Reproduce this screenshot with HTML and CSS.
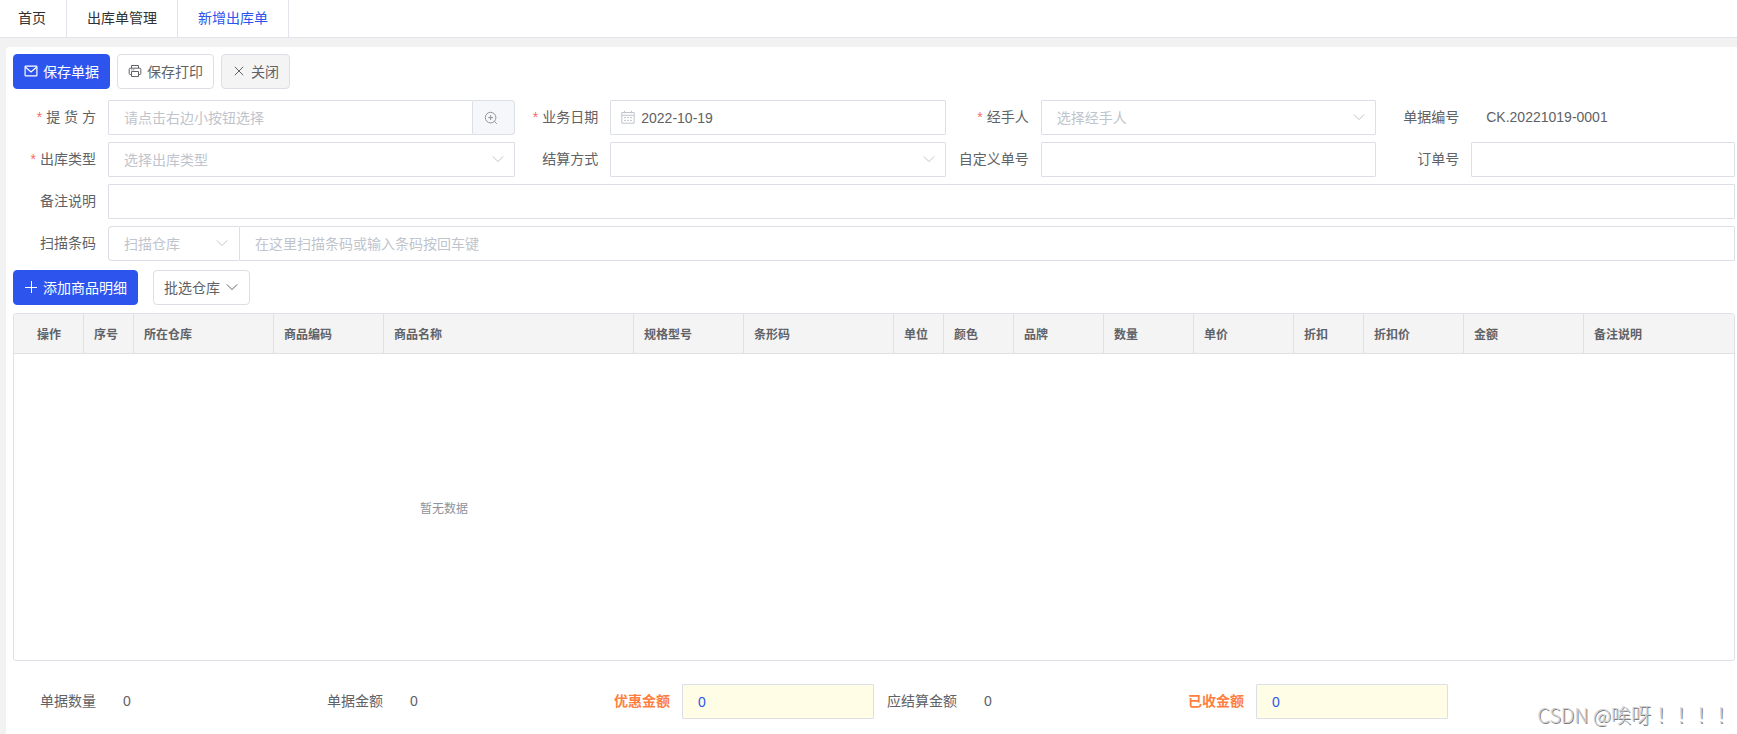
FILE: index.html
```html
<!DOCTYPE html>
<html lang="zh-CN">
<head>
    <meta charset="UTF-8">
    <meta name="viewport" content="width=device-width, initial-scale=1.0">
    <title>新增出库单</title>
    <link rel="stylesheet" href="styles.css">
</head>
<body>
    <!-- shared icons -->
    <svg class="sprite" width="0" height="0" aria-hidden="true">
        <symbol id="arrow-down" viewBox="0 0 14 14">
            <path d="M1.8 4.4 7 9.6l5.2-5.2" fill="none" stroke="currentColor"/>
        </symbol>
    </svg>

    <nav class="tabs">
        <a href="#" class="tab">首页</a>
        <a href="#" class="tab">出库单管理</a>
        <a href="#" class="tab active">新增出库单</a>
    </nav>

    <main class="panel">
        <div class="toolbar">
            <button type="button" class="btn primary">
                <svg class="icon" viewBox="0 0 14 14" fill="none" stroke="currentColor" stroke-width="1.2"><rect x="1.1" y="2.1" width="11.8" height="9.8" rx="0.6"/><path d="M1.5 3.2 7 8l5.5-4.8"/></svg>
                <span>保存单据</span>
            </button>
            <button type="button" class="btn">
                <svg class="icon" viewBox="0 0 14 14" fill="none" stroke="currentColor"><path d="M3.5 4V1.5h7V4M3.5 10.5H2.2a1 1 0 0 1-1-1V5.2a1 1 0 0 1 1-1h9.6a1 1 0 0 1 1 1v4.3a1 1 0 0 1-1 1h-1.3"/><path d="M3.5 7.5h7v5h-7zM3.3 5.9h1M5.3 5.9h1"/></svg>
                <span>保存打印</span>
            </button>
            <button type="button" class="btn muted">
                <svg class="icon" viewBox="0 0 14 14" fill="none" stroke="currentColor"><path d="m2.8 2.8 8.4 8.4M11.2 2.8l-8.4 8.4"/></svg>
                <span>关闭</span>
            </button>
        </div>

        <form class="form">
            <div class="form-item span-7">
                <label for="customer" class="required">提 货 方</label>
                <div class="field group">
                    <input type="text" id="customer" class="input" placeholder="请点击右边小按钮选择">
                    <button type="button" class="append" aria-label="选择提货方">
                        <svg class="icon" viewBox="0 0 14 14" fill="none" stroke="currentColor"><circle cx="6.6" cy="6.6" r="5.3"/><path d="M4.2 6.6H9M6.6 4.2V9M10.4 10.4l2.4 2.4"/></svg>
                    </button>
                </div>
            </div>
            <div class="form-item span-6">
                <label for="date" class="required">业务日期</label>
                <div class="field">
                    <svg class="icon date-icon" viewBox="0 0 14 14" fill="none" stroke="currentColor"><path d="M.8 2.5h12.4v10.7H.8zM.8 5.3h12.4M3.5.8v2.4M10.5.8v2.4"/><path d="M3 7.6h2M6 7.6h2M9 7.6h2M3 10.4h2M6 10.4h2M9 10.4h2"/></svg>
                    <input type="text" id="date" class="input with-icon" value="2022-10-19">
                </div>
            </div>
            <div class="form-item span-6">
                <label for="handler" class="required">经手人</label>
                <div class="field">
                    <select id="handler" class="input select"><option>选择经手人</option></select>
                    <svg class="icon arrow"><use href="#arrow-down"/></svg>
                </div>
            </div>
            <div class="form-item span-5">
                <span class="label">单据编号</span>
                <span class="value">CK.20221019-0001</span>
            </div>

            <div class="form-item span-7">
                <label for="type" class="required">出库类型</label>
                <div class="field">
                    <select id="type" class="input select"><option>选择出库类型</option></select>
                    <svg class="icon arrow"><use href="#arrow-down"/></svg>
                </div>
            </div>
            <div class="form-item span-6">
                <label for="settle">结算方式</label>
                <div class="field">
                    <select id="settle" class="input select"><option></option></select>
                    <svg class="icon arrow"><use href="#arrow-down"/></svg>
                </div>
            </div>
            <div class="form-item span-6">
                <label for="custom-no">自定义单号</label>
                <div class="field"><input type="text" id="custom-no" class="input"></div>
            </div>
            <div class="form-item span-5">
                <label for="order-no">订单号</label>
                <div class="field"><input type="text" id="order-no" class="input"></div>
            </div>

            <div class="form-item span-24">
                <label for="remark">备注说明</label>
                <div class="field"><input type="text" id="remark" class="input"></div>
            </div>

            <div class="form-item span-24">
                <label for="barcode">扫描条码</label>
                <div class="field group">
                    <div class="prepend">
                        <select class="input select" aria-label="扫描仓库"><option>扫描仓库</option></select>
                        <svg class="icon arrow"><use href="#arrow-down"/></svg>
                    </div>
                    <input type="text" id="barcode" class="input" placeholder="在这里扫描条码或输入条码按回车键">
                </div>
            </div>
        </form>

        <div class="toolbar detail-bar">
            <button type="button" class="btn primary">
                <svg class="icon" viewBox="0 0 14 14" fill="none" stroke="currentColor"><path d="M1 7.5h12M7.5 1v12"/></svg>
                <span>添加商品明细</span>
            </button>
            <button type="button" class="btn">
                <span>批选仓库</span>
                <svg class="icon"><use href="#arrow-down"/></svg>
            </button>
        </div>

        <div class="table-wrap">
            <table class="table">
                <colgroup>
                    <col class="w70"><col class="w50"><col class="w140"><col class="w110">
                    <col class="w250"><col class="w110"><col class="w150"><col class="w50">
                    <col class="w70"><col class="w90"><col class="w90"><col class="w100">
                    <col class="w70"><col class="w100"><col class="w120"><col>
                </colgroup>
                <thead>
                    <tr>
                        <th class="center">操作</th>
                        <th>序号</th>
                        <th>所在仓库</th>
                        <th>商品编码</th>
                        <th>商品名称</th>
                        <th>规格型号</th>
                        <th>条形码</th>
                        <th>单位</th>
                        <th>颜色</th>
                        <th>品牌</th>
                        <th>数量</th>
                        <th>单价</th>
                        <th>折扣</th>
                        <th>折扣价</th>
                        <th>金额</th>
                        <th>备注说明</th>
                    </tr>
                </thead>
                <tbody>
                    <tr>
                        <td colspan="16" class="empty"><div class="empty-text">暂无数据</div></td>
                    </tr>
                </tbody>
            </table>
        </div>

        <div class="summary">
            <div class="form-item">
                <span class="label">单据数量</span>
                <span class="value">0</span>
            </div>
            <div class="form-item">
                <span class="label">单据金额</span>
                <span class="value">0</span>
            </div>
            <div class="form-item">
                <label for="discount" class="strong">优惠金额</label>
                <div class="field"><input type="text" id="discount" class="input money" value="0"></div>
            </div>
            <div class="form-item">
                <span class="label">应结算金额</span>
                <span class="value">0</span>
            </div>
            <div class="form-item">
                <label for="received" class="strong">已收金额</label>
                <div class="field"><input type="text" id="received" class="input money" value="0"></div>
            </div>
        </div>
    </main>

    <div class="watermark" lang="zh-TW">CSDN @唉呀！！！！</div>
</body>
</html>
```

FILE: styles.css
```css
* {
    box-sizing: border-box;
}
body {
    margin: 0;
    min-height: 100vh;
    display: flex;
    flex-direction: column;
    position: relative;
    background: #f2f2f2;
    color: #606266;
    font-family: "Liberation Sans", "Noto Sans CJK SC", sans-serif;
    font-size: 14px;
    overflow-x: hidden;
}
button, input, select {
    font: inherit;
    color: inherit;
}
.sprite {
    position: absolute;
}
.icon {
    width: 14px;
    height: 14px;
    flex: none;
}

/* top tabs */
.tabs {
    display: flex;
    height: 38px;
    padding-right: 20px;
    background: #fff;
    border-bottom: 1px solid #e2e3eb;
}
.tab {
    padding: 0 20px;
    line-height: 36px;
    color: #303133;
    text-decoration: none;
    border-right: 1px solid #e2e3eb;
}
.tab:first-child {
    padding-left: 18px;
}
.tab.active {
    color: #2d55ee;
}

.panel {
    flex: 1;
    margin: 9px 0 0 6px;
    padding: 7px 2px 15px 7px;
    background: #fff;
    border-radius: 4px 0 0 0;
}

/* buttons */
.toolbar {
    display: flex;
    gap: 7px;
}
.detail-bar {
    gap: 15px;
    margin: 9px 0 8px;
}
.btn {
    display: flex;
    align-items: center;
    gap: 5px;
    height: 35px;
    padding: 0 10px 1px;
    background: #fff;
    border: 1px solid #dcdfe6;
    border-radius: 4px;
    white-space: nowrap;
    cursor: pointer;
}
.btn.primary {
    background: #2d55ee;
    border-color: #2d55ee;
    color: #fff;
}
.btn.muted {
    background: #f5f4f5;
}

/* form, 24 column grid */
.form {
    display: grid;
    grid-template-columns: repeat(24, 1fr);
    row-gap: 7px;
    margin-top: 11px;
}
.span-5 {
    grid-column: span 5;
}
.span-6 {
    grid-column: span 6;
}
.span-7 {
    grid-column: span 7;
}
.span-24 {
    grid-column: span 24;
}
.form-item {
    display: flex;
    min-width: 0;
}
.form-item label,
.label {
    flex: none;
    width: 95px;
    padding-right: 12px;
    line-height: 35px;
    text-align: right;
    white-space: nowrap;
}
.required::before {
    content: "*";
    margin-right: 4px;
    color: #f56c6c;
}
.field {
    flex: 1;
    min-width: 0;
    position: relative;
}
.input {
    display: block;
    width: 100%;
    height: 35px;
    padding: 0 15px;
    background: #fff;
    border: 1px solid #dcdfe6;
    border-radius: 1px;
    outline: none;
}
.input::placeholder {
    color: #c0c4cc;
    opacity: 1;
}
.select {
    appearance: none;
    padding-right: 30px;
    color: #c0c4cc;
}
.arrow {
    position: absolute;
    top: 10px;
    right: 10px;
    color: #c0c4cc;
    pointer-events: none;
}
.with-icon {
    padding-left: 30px;
}
.date-icon {
    position: absolute;
    top: 10px;
    left: 11px;
    color: #c0c4cc;
}
.value {
    padding-left: 15px;
    line-height: 35px;
}

/* input with something glued on */
.group {
    display: flex;
}
.append {
    display: flex;
    flex: none;
    align-items: center;
    justify-content: center;
    width: 42px;
    padding: 0 5px 0 0;
    background: #f5f7fa;
    border: 1px solid #dcdfe6;
    border-left: 0;
    border-radius: 0 4px 4px 0;
    color: #909399;
    cursor: pointer;
}
.prepend {
    flex: none;
    width: 131px;
    position: relative;
}
.prepend .input {
    border-right: 0;
    border-radius: 4px 0 0 4px;
}

/* detail table */
.table-wrap {
    border: 1px solid #dfe1e6;
    border-radius: 3px;
    overflow: hidden;
}
.table {
    width: 100%;
    table-layout: fixed;
    border-collapse: separate;
    border-spacing: 0;
    font-size: 12px;
}
.table th {
    height: 40px;
    padding: 0 9px 0 10px;
    background: #f4f4f4;
    border-right: 1px solid #dfe1e3;
    border-bottom: 1px solid #dfe1e3;
    text-align: left;
    white-space: nowrap;
}
.table th:last-child {
    border-right: 0;
}
.table th.center {
    text-align: center;
}
.w50 { width: 50px; }
.w70 { width: 70px; }
.w90 { width: 90px; }
.w100 { width: 100px; }
.w110 { width: 110px; }
.w120 { width: 120px; }
.w140 { width: 140px; }
.w150 { width: 150px; }
.w250 { width: 250px; }
.empty {
    height: 306px;
    padding: 0;
}
.empty-text {
    width: 50%;
    color: #909399;
    text-align: center;
}

/* totals */
.summary {
    display: grid;
    grid-template-columns: repeat(6, 1fr);
    margin-top: 23px;
}
.form-item .strong {
    color: #ff7f41;
    font-weight: bold;
}
.money {
    background: #fffde6;
    color: #2d55ee;
}

.watermark {
    position: absolute;
    right: 6px;
    bottom: 4px;
    color: #d0d0d0;
    font-family: "Noto Sans CJK TC", sans-serif;
    font-size: 20px;
    font-weight: 300;
    line-height: 30px;
    text-shadow: 1px 1px 0 #808080;
    pointer-events: none;
}
```
